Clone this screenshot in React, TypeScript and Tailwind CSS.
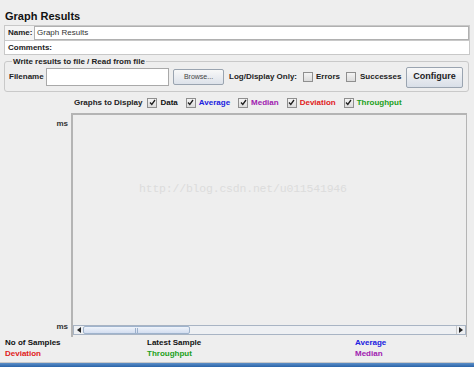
import React from "react";

const font = { fontFamily: '"Liberation Sans", Arial, sans-serif' };

function Check({ checked = true }: { checked?: boolean }) {
  return (
    <span className="inline-flex shrink-0 items-center justify-center w-[10px] h-[10px] border border-[#8f8f8f] bg-gradient-to-b from-[#f4f4f4] to-[#dcdcdc]">
      {checked && (
        <svg width="7" height="7" viewBox="0 0 7 7">
          <path d="M1 3.5 L2.8 5.5 L6 1" fill="none" stroke="#1f1f1f" strokeWidth="1.3" />
        </svg>
      )}
    </span>
  );
}

function Option({ label, color }: { label: string; color: string }) {
  return (
    <span className="flex items-center gap-[3px] whitespace-nowrap">
      <Check />
      <span className={`font-bold ${color}`}>{label}</span>
    </span>
  );
}

export default function App() {
  return (
    <div
      className="w-[474px] h-[367px] bg-[#eeeeee] flex flex-col text-[8px] text-[#222] overflow-hidden"
      style={font}
    >
      <div className="px-[5px] pt-[8px] h-[25px] text-[11px] font-bold text-[#111]">Graph Results</div>

      {/* name / comments */}
      <div className="mx-[4px] w-[466px] flex flex-col">
        <div className="flex items-center h-[16px] border border-[#c8c8c8] bg-[#f4f4f4] pl-[3px]">
          <span className="font-bold w-[26px]">Name:</span>
          <div className="flex-1 h-[14px] bg-white border border-[#b0b0b0] flex items-center pl-[2px] text-[#333]">
            Graph Results
          </div>
        </div>
        <div className="flex items-center h-[14px] border border-t-0 border-[#c8c8c8] bg-white pl-[3px]">
          <span className="font-bold">Comments:</span>
        </div>
      </div>

      {/* file panel */}
      <fieldset className="mx-[4px] mt-[2px] w-[465px] h-[35px] border border-[#c9c9c9] rounded-[3px] px-[4px] pb-[2px]">
        <legend className="ml-[3px] px-[1px] font-bold text-[#222] leading-[9px]">
          Write results to file / Read from file
        </legend>
        <div className="flex items-center h-[22px] whitespace-nowrap">
          <span className="font-bold w-[37px] shrink-0">Filename</span>
          <div className="w-[123px] shrink-0 h-[18px] bg-white border border-[#a9a9a9]" />
          <div className="ml-[4px] shrink-0 w-[51px] h-[16px] border border-[#9aa4b0] rounded-[2px] bg-gradient-to-b from-[#f8f8f8] to-[#dde2ea] flex items-center justify-center text-[7px] text-[#444]">
            Browse...
          </div>
          <span className="ml-[5px] font-bold">Log/Display Only:</span>
          <span className="ml-[6px] flex items-center gap-[3px]">
            <Check checked={false} />
            <span className="font-bold">Errors</span>
          </span>
          <span className="ml-[6px] flex items-center gap-[4px]">
            <Check checked={false} />
            <span className="font-bold">Successes</span>
          </span>
          <div className="ml-auto mr-[1px] shrink-0 w-[57px] h-[21px] border border-[#9aa4b0] rounded-[2px] bg-gradient-to-b from-[#f8f8f8] to-[#d9dfe8] flex items-center justify-center text-[9px] font-bold text-[#222]">
            Configure
          </div>
        </div>
      </fieldset>

      {/* graphs to display */}
      <div className="flex items-center h-[21px] pl-[74px] gap-[8px] whitespace-nowrap">
        <span className="font-bold mr-[-3px]">Graphs to Display</span>
        <Option label="Data" color="text-[#111]" />
        <Option label="Average" color="text-[#2020e0]" />
        <Option label="Median" color="text-[#a020b0]" />
        <Option label="Deviation" color="text-[#e02020]" />
        <Option label="Throughput" color="text-[#20a020]" />
      </div>

      {/* graph area */}
      <div className="flex h-[224px]">
        <div className="w-[71px] flex flex-col justify-between items-end pr-[3px] pt-[5px] pb-[4px] font-bold text-[#333]">
          <span>ms</span>
          <span>ms</span>
        </div>
        <div className="relative w-[396px] border-l-2 border-t-2 border-r border-[#b4b4b4] flex flex-col">
          <div className="flex-1" />
          <span
            className="absolute left-[66px] top-[65px] text-[11.5px] text-[#dcdcdc] tracking-[-0.2px]"
            style={{ fontFamily: '"Liberation Mono", "Courier New", monospace' }}
          >
            http://blog.csdn.net/u011541946
          </span>
          <div className="h-[10px] mb-[2px] flex items-stretch border border-[#a8b4c4] bg-[#eef0f3]">
            <div className="w-[9px] flex items-center justify-center">
              <svg width="4" height="6" viewBox="0 0 4 6"><path d="M4 0 L0 3 L4 6 Z" fill="#222" /></svg>
            </div>
            <div className="w-[107px] border border-[#9fb3cc] rounded-[2px] bg-gradient-to-b from-[#eef3fa] to-[#d3def0] flex items-center justify-center">
              <div className="w-[3px] h-[5px] border-l border-r border-[#9bb0cc]" />
            </div>
            <div className="flex-1" />
            <div className="w-[9px] flex items-center justify-center border-l border-[#c8c8c8]">
              <svg width="4" height="6" viewBox="0 0 4 6"><path d="M0 0 L4 3 L0 6 Z" fill="#222" /></svg>
            </div>
          </div>
        </div>
      </div>

      {/* legend */}
      <div className="grid grid-cols-[142px_208px_1fr] pl-[5px] pt-[0px] font-bold leading-[11px]">
        <span className="text-[#111]">No of Samples</span>
        <span className="text-[#111]">Latest Sample</span>
        <span className="text-[#2020e0]">Average</span>
        <span className="text-[#e02020]">Deviation</span>
        <span className="text-[#20a020]">Throughput</span>
        <span className="text-[#a020b0]">Median</span>
      </div>

      <div className="mt-auto h-[1px] bg-[#c8c8c8]" />
      <div className="h-[4px] bg-gradient-to-b from-[#5b8fc8] to-[#2a64a8]" />
    </div>
  );
}
